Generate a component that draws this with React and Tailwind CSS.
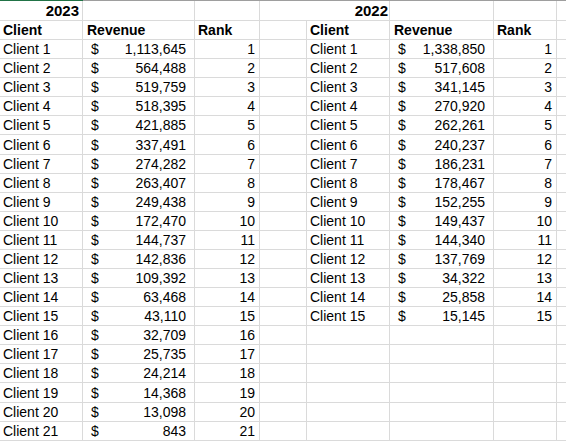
import React from "react";

const data2023 = [
  "1,113,645", "564,488", "519,759", "518,395", "421,885", "337,491", "274,282",
  "263,407", "249,438", "172,470", "144,737", "142,836", "109,392", "63,468",
  "43,110", "32,709", "25,735", "24,214", "14,368", "13,098", "843",
];

const data2022 = [
  "1,338,850", "517,608", "341,145", "270,920", "262,261", "240,237", "186,231",
  "178,467", "152,255", "149,437", "144,340", "137,769", "34,322", "25,858", "15,145",
];

// one grid row of cells, each with a right + bottom gridline
function Row({ cells, first }) {
  return (
    <div
      className={
        "grid grid-cols-[83px_112px_65px_47px_83px_104px_63px_1fr] " +
        (first ? "h-[20px]" : "h-[19.09px]")
      }
    >
      {cells.map((c, i) => (
        <div
          key={i}
          className={
            "flex items-center overflow-visible whitespace-nowrap border-b border-[#dadada] " +
            (c.noRight ? "" : "border-r ") +
            (c.className || "")
          }
        >
          {c.content}
        </div>
      ))}
    </div>
  );
}

const money = (v) =>
  v ? (
    <div className="flex w-full justify-between pl-[8px] pr-[8px]">
      <span>$</span>
      <span>{v}</span>
    </div>
  ) : null;

export default function App() {
  const rows = [];
  for (let i = 0; i < 21; i++) {
    const has22 = i < data2022.length;
    rows.push(
      <Row
        key={i}
        cells={[
          { content: `Client ${i + 1}`, className: "pl-[3px]" },
          { content: money(data2023[i]) },
          { content: String(i + 1), className: "justify-end pr-[4px]" },
          {},
          { content: has22 ? `Client ${i + 1}` : "", className: "pl-[3px]" },
          { content: has22 ? money(data2022[i]) : null },
          { content: has22 ? String(i + 1) : "", className: "justify-end pr-[4px]" },
          { noRight: true },
        ]}
      />
    );
  }

  return (
    <div className="w-[566px] h-[441px] overflow-hidden bg-white text-[14px] leading-[16px] text-black font-['Liberation_Sans',Arial,sans-serif]">
      <div className="flex h-px">
        <div className="w-[83px] bg-[#217346]" />
        <div className="flex-1 bg-[#9e9e9e]" />
      </div>
      <Row
        first
        cells={[
          { content: "2023", className: "justify-end pr-[3px] font-bold text-[15px]" },
          {},
          {},
          { noRight: true },
          { content: "2022", className: "justify-end pr-[1px] font-bold text-[15px]" },
          {},
          {},
          { noRight: true },
        ]}
      />
      <Row
        cells={[
          { content: "Client", className: "pl-[3px] font-bold" },
          { content: "Revenue", className: "pl-[4px] font-bold" },
          { content: "Rank", className: "pl-[3px] font-bold" },
          {},
          { content: "Client", className: "pl-[3px] font-bold" },
          { content: "Revenue", className: "pl-[4px] font-bold" },
          { content: "Rank", className: "pl-[3px] font-bold" },
          { noRight: true },
        ]}
      />
      {rows}
    </div>
  );
}
